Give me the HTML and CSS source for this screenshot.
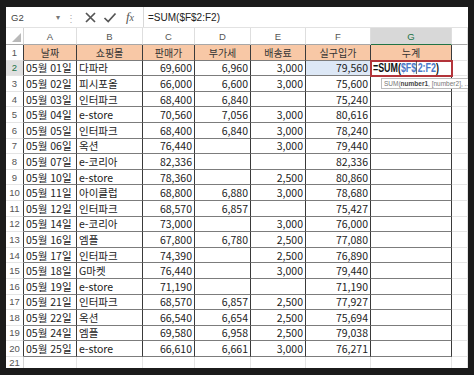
FILE: index.html
```html
<!DOCTYPE html>
<html lang="ko">
<head>
    <meta charset="UTF-8">
    <meta name="viewport" content="width=device-width, initial-scale=1.0">
    <title>누계 구하기</title>
    <link rel="stylesheet" href="styles.css">
</head>
<body>
    <section class="window">
        <div class="formula-bar">
            <div class="name-box">G2<span class="name-arrow">&#9662;</span></div>
            <span class="bar-dots">&#8942;</span>
            <span class="bar-icon">
                <svg width="13" height="13" viewBox="0 0 13 13"><path d="M2 2L11 11M11 2L2 11" stroke="#555" stroke-width="1.7" fill="none"/></svg>
            </span>
            <span class="bar-icon">
                <svg width="14" height="13" viewBox="0 0 14 13"><path d="M1.5 7L5.2 10.6L12.5 2.5" stroke="#555" stroke-width="1.7" fill="none"/></svg>
            </span>
            <span class="bar-fx"><i>f</i><i class="fx-x">x</i></span>
            <div class="formula-input">=SUM($F$2:F2)</div>
        </div>
        <div class="sheet" id="sheet">
            <div class="corner">
                <svg width="9" height="9" viewBox="0 0 9 9"><path d="M9 0V9H0Z" fill="#b9b9b9"/></svg>
            </div>
            <div class="col-head">A</div>
            <div class="col-head">B</div>
            <div class="col-head">C</div>
            <div class="col-head">D</div>
            <div class="col-head">E</div>
            <div class="col-head">F</div>
            <div class="col-head active">G</div>
            <div class="col-head"></div>
        </div>
    </section>
    <script>
        // 날짜, 쇼핑몰, 판매가, 부가세, 배송료, 실구입가
        const rows = [
            ['05월 01일', '다파라', '69,600', '6,960', '3,000', '79,560'],
            ['05월 02일', '피시포올', '66,000', '6,600', '3,000', '75,600'],
            ['05월 03일', '인터파크', '68,400', '6,840', '', '75,240'],
            ['05월 04일', 'e-store', '70,560', '7,056', '3,000', '80,616'],
            ['05월 05일', '인터파크', '68,400', '6,840', '3,000', '78,240'],
            ['05월 06일', '옥션', '76,440', '', '3,000', '79,440'],
            ['05월 07일', 'e-코리아', '82,336', '', '', '82,336'],
            ['05월 10일', 'e-store', '78,360', '', '2,500', '80,860'],
            ['05월 11일', '아이클럽', '68,800', '6,880', '3,000', '78,680'],
            ['05월 12일', '인터파크', '68,570', '6,857', '', '75,427'],
            ['05월 14일', 'e-코리아', '73,000', '', '3,000', '76,000'],
            ['05월 16일', '엠플', '67,800', '6,780', '2,500', '77,080'],
            ['05월 17일', '인터파크', '74,390', '', '2,500', '76,890'],
            ['05월 18일', 'G마켓', '76,440', '', '3,000', '79,440'],
            ['05월 19일', 'e-store', '71,190', '', '', '71,190'],
            ['05월 21일', '인터파크', '68,570', '6,857', '2,500', '77,927'],
            ['05월 22일', '옥션', '66,540', '6,654', '2,500', '75,694'],
            ['05월 24일', '엠플', '69,580', '6,958', '2,500', '79,038'],
            ['05월 25일', 'e-store', '66,610', '6,661', '3,000', '76,271']
        ];
        const titles = ['날짜', '쇼핑몰', '판매가', '부가세', '배송료', '실구입가', '누계'];
        const sheet = document.getElementById('sheet');

        function addCell(text, className) {
            const cell = document.createElement('div');
            cell.className = className;
            cell.textContent = text;
            sheet.appendChild(cell);
            return cell;
        }

        // Row 1 - table titles
        addCell('1', 'row-head in-table');
        titles.forEach((title) => addCell(title, 'cell title'));
        addCell('', 'cell blank');

        // Rows 2 - 20
        rows.forEach((row, i) => {
            const rowNum = i + 2;
            addCell(rowNum, rowNum === 2 ? 'row-head in-table active' : 'row-head in-table');
            addCell(row[0], 'cell text');
            addCell(row[1], 'cell text');
            addCell(row[2], 'cell num');
            addCell(row[3], 'cell num');
            addCell(row[4], 'cell num');
            addCell(row[5], rowNum === 2 ? 'cell num ref' : 'cell num');
            const total = addCell('', 'cell');
            if (rowNum === 2) {
                total.classList.add('editing');
                total.innerHTML = '<span class="edit-text">=SUM(<span class="ref-text">$F$<span class="caret"></span>2:F2</span>)</span>'
                    + '<span class="tip">SUM(<b>number1</b>, [number2], ...)</span>';
            }
            addCell('', 'cell blank');
        });

        // Row 21 - empty, half hidden by the window edge
        addCell('21', 'row-head last');
        for (let c = 0; c < 8; c++) {
            addCell('', 'cell blank');
        }
    </script>
</body>
</html>
```

FILE: styles.css
```css
* {
    margin: 0;
    padding: 0;
    box-sizing: border-box;
}
body {
    width: 474px;
    height: 375px;
    padding: 7px 6px;
    background-color: #1b1b1b;
    font-family: "Noto Sans CJK KR", "Liberation Sans", sans-serif;
    overflow: hidden;
}
.window {
    display: flex;
    flex-direction: column;
    width: 462px;
    height: 361px;
    background-color: #fff;
    overflow: hidden;
}

/* formula bar */
.formula-bar {
    display: flex;
    align-items: center;
    flex-shrink: 0;
    height: 21px;
    border-bottom: 1px solid #e2e2e2;
    color: #555;
}
.name-box {
    display: flex;
    align-items: center;
    justify-content: space-between;
    width: 56px;
    height: 15px;
    padding: 0 2px 0 5px;
    font-family: "Liberation Sans", sans-serif;
    font-size: 9.5px;
    color: #444;
}
.name-arrow {
    font-size: 8px;
    color: #777;
}
.bar-dots {
    width: 18px;
    text-align: center;
    font-size: 10px;
    color: #b0b0b0;
}
.bar-icon {
    display: flex;
    width: 20px;
    justify-content: center;
}
.bar-fx {
    width: 20px;
    text-align: center;
    font-family: "Liberation Serif", serif;
    font-size: 13px;
    color: #555;
}
.fx-x {
    font-size: 10px;
}
.formula-input {
    flex: 1;
    height: 100%;
    display: flex;
    align-items: center;
    margin-left: 3px;
    padding-left: 4px;
    border-left: 1px solid #d8d8d8;
    font-family: "Liberation Sans", sans-serif;
    font-size: 10px;
    color: #222;
}

/* sheet grid */
.sheet {
    display: grid;
    grid-template-columns: 18px 53px 66px 52px 56px 55px 65px 81px 1fr;
    grid-template-rows: 17px;
    grid-auto-rows: 15.6px;
    font-size: 10px;
}
.corner {
    display: flex;
    align-items: flex-end;
    justify-content: flex-end;
    padding: 0 2px 2px 0;
    border-right: 1px solid #d4d4d4;
    border-bottom: 1px solid #a8a8a8;
}
.col-head {
    display: flex;
    align-items: center;
    justify-content: center;
    border-right: 1px solid #dedede;
    border-bottom: 1px solid #a8a8a8;
    font-family: "Liberation Sans", sans-serif;
    font-size: 9.5px;
    color: #555;
}
.col-head.active {
    background-color: #d8d8d8;
    color: #217346;
    border-bottom: 1px solid #217346;
}
.row-head {
    display: flex;
    align-items: center;
    justify-content: center;
    border-right: 1px solid #d4d4d4;
    border-bottom: 1px solid #e4e4e4;
    font-family: "Liberation Sans", sans-serif;
    font-size: 9.5px;
    color: #555;
}
.row-head.in-table {
    border-right: 1px solid #3a3a3a;
}
.row-head.active {
    background-color: #e0e0e0;
    color: #217346;
}
.row-head.last {
    align-items: flex-start;
    padding-top: 1px;
    line-height: 10px;
}
.cell {
    display: flex;
    align-items: center;
    padding: 0 2px;
    white-space: nowrap;
    border-right: 1px solid #3a3a3a;
    border-bottom: 1px solid #7c7c7c;
    color: #222;
}
.cell.blank {
    border-right: 1px solid #e4e4e4;
    border-bottom: 1px solid #e4e4e4;
}
.title {
    justify-content: center;
    background-color: #f8c8a6;
    font-size: 10px;
    color: #333;
}
.text {
    font-size: 10.5px;
}
.num {
    justify-content: flex-end;
    font-size: 10.5px;
}
.ref {
    background-color: #dde8f6;
}

/* editing cell G2 */
.editing {
    position: relative;
    overflow: visible;
    outline: 2px solid #b3343a;
    outline-offset: -1px;
}
.edit-text {
    display: inline-block;
    font-family: "Liberation Sans", sans-serif;
    font-size: 12px;
    font-weight: bold;
    color: #111;
    transform: scaleX(0.74);
    transform-origin: left center;
}
.ref-text {
    color: #4a78c8;
}
.caret {
    display: inline-block;
    width: 1px;
    height: 13px;
    margin: 0 1px -2px 0;
    background-color: #222;
}
.tip {
    position: absolute;
    top: 17px;
    left: 10px;
    z-index: 2;
    height: 11px;
    padding: 0 2px;
    border: 1px solid #bcbcbc;
    background-color: #fff;
    font-family: "Liberation Sans", sans-serif;
    font-size: 6.5px;
    line-height: 9px;
    color: #777;
}
.tip b {
    color: #444;
}
```
